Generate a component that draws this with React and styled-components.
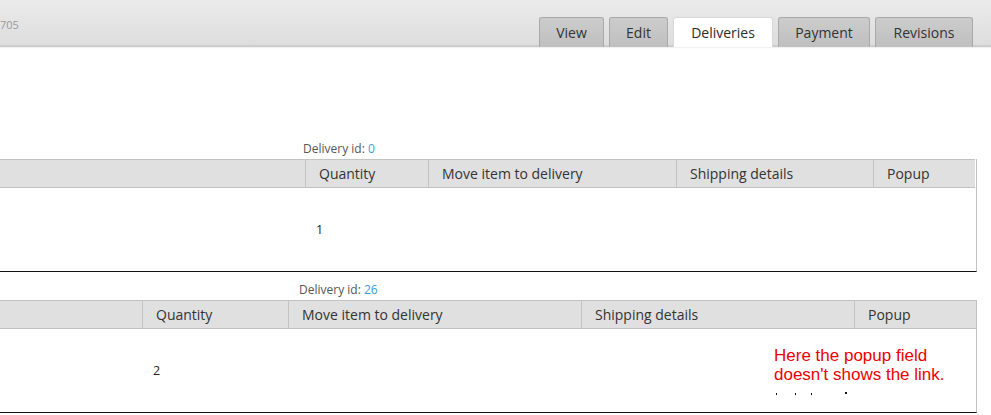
import React from "react";
import styled, { createGlobalStyle } from "styled-components";

const GlobalStyle = createGlobalStyle`
  html, body {
    margin: 0;
    padding: 0;
    background: #fff;
    font-family: "Open Sans", "DejaVu Sans", sans-serif;
    color: #333;
  }
`;

const tabs = [
  { label: "View", width: 65 },
  { label: "Edit", width: 59 },
  { label: "Deliveries", width: 100 },
  { label: "Payment", width: 92 },
  { label: "Revisions", width: 98 },
];

const deliveries = [
  {
    id: "0",
    quantity: "1",
    captionLeft: 303,
    captionTop: 95,
    columns: "305px 123px 248px 197px 102px",
  },
  {
    id: "26",
    quantity: "2",
    captionLeft: 299,
    captionTop: 11,
    columns: "142px 146px 293px 273px 122px",
    note: true,
  },
];

function App() {
  return (
    <>
      <GlobalStyle />
      <Page>
        <TopBar>
          <OrderNumber>705</OrderNumber>
          <TabList>
            {tabs.map((t) => (
              <Tab key={t.label} width={t.width} active={t.label === "Deliveries"}>
                {t.label}
              </Tab>
            ))}
          </TabList>
        </TopBar>
        <Content>
          {deliveries.map((d) => (
            <DeliveryBlock key={d.id} top={d.captionTop}>
              <Caption left={d.captionLeft}>
                Delivery id: <IdLink>{d.id}</IdLink>
              </Caption>
              <Table columns={d.columns}>
                <HeadCell first />
                <HeadCell>Quantity</HeadCell>
                <HeadCell>Move item to delivery</HeadCell>
                <HeadCell>Shipping details</HeadCell>
                <HeadCell>Popup</HeadCell>
                <BodyCell />
                <BodyCell>{d.quantity}</BodyCell>
                <BodyCell />
                {d.note ? (
                  <NoteCell>
                    <Note>
                      Here the popup field
                      <br />
                      doesn't shows the link.
                    </Note>
                    <svg width="80" height="3" viewBox="0 0 80 3">
                      <rect x="2" y="1" width="1" height="2" fill="#111" />
                      <rect x="21" y="1" width="1" height="2" fill="#111" />
                      <rect x="37" y="1" width="1" height="2" fill="#111" />
                      <rect x="71" y="0" width="2" height="2" fill="#111" />
                    </svg>
                  </NoteCell>
                ) : (
                  <>
                    <BodyCell />
                    <BodyCell />
                  </>
                )}
              </Table>
            </DeliveryBlock>
          ))}
        </Content>
      </Page>
    </>
  );
}

const Page = styled.div`
  width: 991px;
  height: 415px;
  overflow: hidden;
`;

const TopBar = styled.div`
  height: 47px;
  box-sizing: border-box;
  background: linear-gradient(#ebebeb, #dddddd);
  border-bottom: 2px solid #cdcdcd;
  box-shadow: 0 1px 1px rgba(0, 0, 0, 0.06);
  display: flex;
  justify-content: space-between;
  align-items: flex-start;
  padding-right: 18px;
`;

const OrderNumber = styled.span`
  font-size: 11px;
  color: #9a9a9a;
  margin-top: 17px;
`;

const TabList = styled.div`
  display: flex;
  gap: 5px;
  margin-top: 17px;
`;

const Tab = styled.div`
  width: ${(p) => p.width}px;
  height: 30px;
  box-sizing: border-box;
  display: flex;
  align-items: center;
  justify-content: center;
  font-size: 14px;
  color: ${(p) => (p.active ? "#2b2b2b" : "#333")};
  background: ${(p) =>
    p.active ? "#fff" : "linear-gradient(#cccccc, #bfbfbf)"};
  border: 1px solid ${(p) => (p.active ? "#d8d8d8" : "#a9a9a9")};
  border-bottom: none;
  border-radius: 3px 3px 0 0;
  position: relative;
  z-index: 1;
`;

const Content = styled.div`
  display: flex;
  flex-direction: column;
`;

const DeliveryBlock = styled.div`
  margin-top: ${(p) => p.top}px;
  display: flex;
  flex-direction: column;
`;

const Caption = styled.div`
  font-size: 12px;
  color: #555;
  line-height: 14px;
  padding-left: ${(p) => p.left}px;
  margin-bottom: 3px;
`;

const IdLink = styled.span`
  color: #3a9be0;
`;

const Table = styled.div`
  display: grid;
  grid-template-columns: ${(p) => p.columns};
  grid-template-rows: 29px 83px;
  width: 977px;
  box-sizing: border-box;
  border-right: 1px solid #c3c3c0;
  border-bottom: 1px solid #111;
`;

const HeadCell = styled.div`
  background: #e0e0e0;
  border-top: 1px solid #c3c3c0;
  border-bottom: 1px solid #c3c3c0;
  border-left: ${(p) => (p.first ? "none" : "1px solid #c3c3c0")};
  box-sizing: border-box;
  display: flex;
  align-items: center;
  padding-left: 13px;
  font-size: 14px;
  color: #333;
`;

const BodyCell = styled.div`
  display: flex;
  align-items: center;
  padding-left: 11px;
  font-size: 12.5px;
  color: #222;
`;

const NoteCell = styled.div`
  grid-column: 4 / 6;
  display: flex;
  flex-direction: column;
  padding: 17px 0 0 193px;
  gap: 8px;
`;

const Note = styled.div`
  font-family: "Liberation Sans", Arial, sans-serif;
  font-size: 17px;
  line-height: 19px;
  color: #ee0000;
  -webkit-font-smoothing: none;
`;

export default App;
